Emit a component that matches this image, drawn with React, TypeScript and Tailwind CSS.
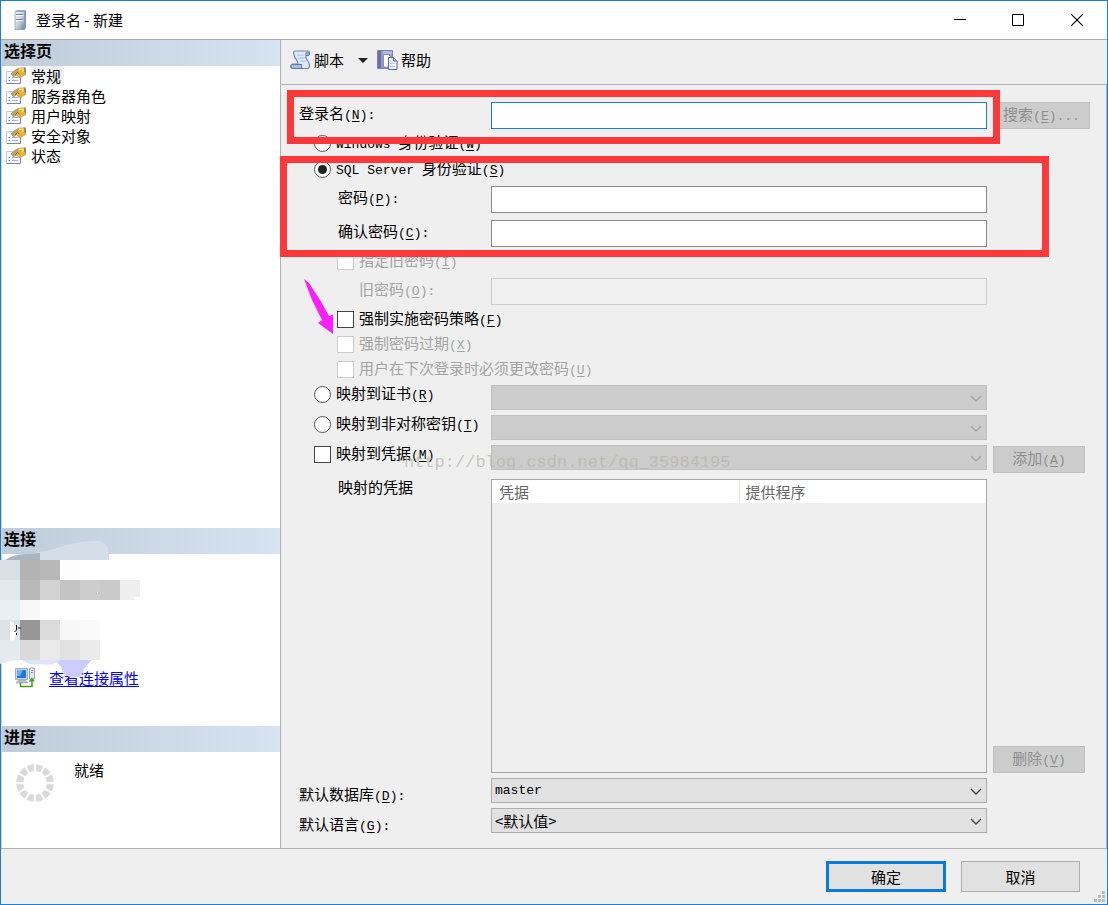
import { useState } from "react";
import type { ReactNode } from "react";

type CaptionProps = { text: ReactNode; hotkey?: string; tail?: string };

function Latin({ children }: { children: ReactNode }) {
  return <span className="font-['Liberation_Mono',monospace] text-[13px]">{children}</span>;
}

function Caption({ text, hotkey, tail }: CaptionProps) {
  return (
    <span className="whitespace-nowrap">
      {text}
      {hotkey && (
        <Latin>
          (<span className="underline underline-offset-2">{hotkey}</span>){tail}
        </Latin>
      )}
    </span>
  );
}

const fieldBase = "h-[27px] min-w-0 flex-1 border px-1 outline-none";
const boxBase =
  "m-0 size-[17px] shrink-0 appearance-none border border-[#444] bg-white disabled:border-[#ccc]";

function SidebarHeading({ children }: { children: ReactNode }) {
  return (
    <h2 className="flex h-[26px] items-center bg-linear-to-r from-[#bfccd9] to-[#d6e4f1] pb-[6px] pl-[2px] text-[16px] font-bold">
      {children}
    </h2>
  );
}

function TextRow({
  id,
  caption,
  indent,
  className,
  input,
  disabled,
  type = "text",
  children,
}: {
  id: string;
  caption: ReactNode;
  indent: string;
  className: string;
  input: string;
  disabled?: boolean;
  type?: string;
  children?: ReactNode;
}) {
  return (
    <div className={`flex h-7 gap-[6px] ${className}`}>
      <div className="flex min-w-0 flex-1">
        <label
          htmlFor={id}
          className={`flex w-[193px] shrink-0 items-center pb-1 ${indent} ${disabled ? "text-[#a3a3a3]" : ""}`}
        >
          {caption}
        </label>
        <input id={id} type={type} disabled={disabled} className={`${fieldBase} ${input}`} />
      </div>
      <div className="w-[97px] shrink-0">{children}</div>
    </div>
  );
}

function CheckRow({
  caption,
  disabled,
  className,
}: {
  caption: ReactNode;
  disabled?: boolean;
  className: string;
}) {
  return (
    <label
      className={`flex items-center gap-[5px] pl-[39px] ${className} ${disabled ? "text-[#a3a3a3]" : ""}`}
    >
      <input type="checkbox" disabled={disabled} className={boxBase} />
      {caption}
    </label>
  );
}

function Radio({
  value,
  current,
  onPick,
}: {
  value: string;
  current: string;
  onPick: (v: string) => void;
}) {
  return (
    <input
      type="radio"
      name="auth"
      checked={current === value}
      onChange={() => onPick(value)}
      className="m-0 grid size-[17px] shrink-0 appearance-none place-items-center rounded-full border border-[#555] bg-white before:size-[9px] before:rounded-full checked:before:bg-[#222]"
    />
  );
}

function Select({
  id,
  label,
  value,
  disabled,
  font = "text-[15px]",
}: {
  id?: string;
  label?: string;
  value?: string;
  disabled?: boolean;
  font?: string;
}) {
  return (
    <div className="relative h-[26px] min-w-0 flex-1">
      <select
        id={id}
        aria-label={label}
        disabled={disabled}
        className={`block h-[25px] w-full appearance-none border border-[#adadad] bg-[#e1e1e1] px-[3px] text-black disabled:border-[#bfbfbf] disabled:bg-[#ccc] disabled:opacity-100 ${font}`}
      >
        {value && <option>{value}</option>}
      </select>
      <svg
        viewBox="0 0 12 7"
        className={`pointer-events-none absolute top-[10px] right-[5px] h-[7px] w-3 ${disabled ? "text-[#a5a5a5]" : "text-[#444]"}`}
      >
        <path d="M1 1l5 5 5-5" fill="none" stroke="currentColor" strokeWidth="1.4" />
      </svg>
    </div>
  );
}

function GreyButton({ children, className }: { children: ReactNode; className: string }) {
  return (
    <button
      type="button"
      disabled
      className={`h-[27px] border border-[#bfbfbf] bg-[#ccc] text-[15px] text-[#8e8e8e] ${className}`}
    >
      {children}
    </button>
  );
}

function ServerIcon() {
  return (
    <svg viewBox="0 0 14 20" className="h-5 w-[14px]">
      <defs>
        <linearGradient id="srv" x1="0" x2="1" y1="0" y2="1">
          <stop offset="0" stopColor="#f4f8fc" />
          <stop offset=".5" stopColor="#c6d3e3" />
          <stop offset="1" stopColor="#7288a8" />
        </linearGradient>
      </defs>
      <path d="M3 1l1-.8h8.500l.5.8v17l-1.500 1.500H3z" fill="#8294ae" />
      <path d="M2 1.500h9.500v18H2z" fill="url(#srv)" stroke="#8c9cb4" strokeWidth=".7" />
      <path d="M3 4.500h7.500M3 9.500h7.500" stroke="#7486a4" />
      <path d="M3 5.500h7.500M3 10.500h7.500" stroke="#fff" />
      <path d="M8.500 16.500h1.500" stroke="#68b06a" strokeWidth="1.5" />
    </svg>
  );
}

function PageIcon() {
  return (
    <svg viewBox="0 0 20 18" className="h-[18px] w-5 shrink-0">
      <path d="M.5 4.500h14v12H.5z" fill="#f6f8ff" stroke="#c3cbe0" />
      <path d="M14.500 6v10.500H1" fill="none" stroke="#7c879e" />
      <path d="M2.500 10.500h1.500M2.500 13.500h1.500" stroke="#6c7cd0" strokeWidth="1.200" />
      <path d="M6 10.500h6M6 13.500h6" stroke="#a3b3ea" strokeWidth="1.200" />
      <path d="M5 7l4.500-4 3-1.800 6-.4 1 1v6l-2 .6-3 2.300-2-.5-2-2.500-3 2.300z" fill="#eab436" stroke="#a08a50" strokeWidth=".6" />
      <path d="M5 6.500l4-3.500 3-1 .5 1.500-4.500 4.500-1 1.500z" fill="#b0a276" />
      <path d="M9 8l2.500-2.500 2 1.500" fill="none" stroke="#7b6a3a" />
      <path d="M13 2.200h4v2.500" fill="none" stroke="#ffdf70" strokeWidth="1.400" />
      <path d="M19 .5v5" fill="none" stroke="#6a8078" strokeWidth="1.400" />
    </svg>
  );
}

function ScriptIcon() {
  return (
    <svg viewBox="0 0 22 20" className="h-5 w-[22px]">
      <path
        d="M5 1h12.500c2.500 0 3 3 1 4.500h-2.500c-1 2 0 3 1.500 5s3 5 1 8H3c-3 0-3-4 0-4.500h5c.5-3-2.500-4.500-3.500-7.500S3 1.500 5 1z"
        fill="#dce9f9"
        stroke="#7189b0"
        strokeWidth="1.200"
      />
      <path d="M2 14.500h10c-1.500 1.500-.5 3.500 1 4H3c-2 0-2.500-2.500-1-4z" fill="#a8c1e2" stroke="#6079a6" />
      <path d="M7.500 5h6M8.500 8h6M10.500 11h5" stroke="#a9c0e2" strokeWidth="1.200" />
      <path d="M16 5.500c-1-2 .5-4.500 2-3.500s1.500 2.500.5 3.500z" fill="#9db7da" stroke="#6079a6" strokeWidth=".8" />
    </svg>
  );
}

function HelpIcon() {
  return (
    <svg viewBox="0 0 21 20" className="h-5 w-[21px]">
      <path d="M.5.5h15v18H.5z" fill="#9299cc" stroke="#7a80b5" />
      <path d="M1 1h3v17H1z" fill="#6b71a8" />
      <path d="M6 1h9v3H6z" fill="#b4b9e2" />
      <path d="M6.500 4.500h5l3 3V17h-8z" fill="#fff" stroke="#8792b6" />
      <path d="M11.500 7.500h5l3.500 3.500v8.500h-8.500z" fill="#eaf2ff" stroke="#566a94" />
      <path d="M16.500 7.500v3.500H20" fill="#b5c8ea" stroke="#566a94" />
      <path d="M13 13.500h5M13 16.500h5" stroke="#b6c7e6" />
    </svg>
  );
}

function ConnectionIcon() {
  return (
    <svg viewBox="0 0 21 21" className="h-[21px] w-[21px]">
      <path d="M.5 1.500h12v11H.5z" fill="#cdd6e5" stroke="#a3aec0" />
      <path d="M2 3h9v8H2z" fill="#1d78df" />
      <path d="M2 3h6l-3 6H2z" fill="#63b1fa" />
      <path d="M3 13.500h8l2 2.500H1z" fill="#b7bfcc" stroke="#949eae" strokeWidth=".6" />
      <path d="M14.500 1.500q2.500-1.500 5 0v10.500h-5z" fill="#e8ebf0" stroke="#9aa2b0" />
      <path d="M16 3.500h2M16 5.500h2" stroke="#7f8ca2" />
      <path d="M5.500 15.500v4h11.500v-6" fill="none" stroke="#40a013" strokeWidth="1.500" />
      <path d="M13.500 14.500L17 10.500l3 4z" fill="#40a013" />
    </svg>
  );
}

function Spinner() {
  return (
    <svg viewBox="0 0 38 38" className="size-[38px]">
      {Array.from({ length: 12 }, (_, i) => (
        <path
          key={i}
          d="M15.500 1Q19 0 22.500 1L20.800 7h-3.600z"
          fill="#dadada"
          stroke="#dadada"
          strokeWidth=".8"
          transform={`rotate(${i * 30 + 15} 19 19)`}
        />
      ))}
    </svg>
  );
}

const mosaic: [number, number, string][] = [
  [0, 40, "#d9dfe3"], [20, 40, "#b3b3b3"], [40, 40, "#b8b8b8"], [60, 40, "#fdfdfd"],
  [0, 60, "#e2e8ec"], [20, 60, "#b9b9b9"], [40, 60, "#d2d2d2"], [60, 60, "#c4c4c4"],
  [80, 60, "#cdcdcd"], [100, 60, "#cacaca"], [120, 60, "#eeeeee"],
  [0, 80, "#e9eff4"], [20, 80, "#f8f8f8"],
  [0, 100, "#dce2e6"], [20, 100, "#969696"], [40, 100, "#dbdbdb"], [60, 100, "#f7f7f7"], [80, 100, "#fafafa"],
  [0, 120, "#e4eaf0"], [20, 120, "#dadada"], [40, 120, "#eaeaea"], [60, 120, "#e1e1e1"], [80, 120, "#ebebeb"],
];

function Mosaic() {
  return (
    <svg viewBox="0 0 150 170" className="pointer-events-none absolute -top-2 -left-[2px] h-[170px] w-[150px]">
      <path d="M5 40q8-6 20-6 15-1 32-6 22-8 42-7 10 2 10 13v6z" fill="#d5dde8" />
      <path d="M5 40q8-5 20-6l15-1v7z" fill="#abb5c1" />
      {mosaic.map(([x, y, fill]) => (
        <rect key={`${x}-${y}`} x={x} y={y} width="20" height="20" fill={fill} />
      ))}
      <path d="M0 140h20q-9 0-20 4z" fill="#e4eaf0" />
      <path d="M22 140h18v4q-10 2-18-4z" fill="#dde4f2" />
      <path d="M40 140h20l-4 3q-8 3-16 1z" fill="#e1e1fe" />
      <path d="M60 140h32q-7 6-10 14-4 5-12 3-7-2-9-10l-4-5z" fill="#ccccff" />
      <path d="M10 101q6 2 6 10l-1 8q-3 3-5 0z" fill="#fff" />
      <path d="M16.500 105v5M14.500 112l2-2M16.500 115v-2M18 108h3" stroke="#111" fill="none" />
      <rect x="97" y="72" width="1" height="1" fill="#fff" />
      <rect x="134" y="77" width="6" height="3" fill="#fff" />
    </svg>
  );
}

const pages = ["常规", "服务器角色", "用户映射", "安全对象", "状态"];

export default function App() {
  const [auth, setAuth] = useState("sql");
  return (
    <div className="flex min-h-screen flex-col border border-[#1a80d6] bg-[#efefef] font-['Noto_Sans_CJK_SC',sans-serif] text-[15px] leading-5 text-black">
      <header className="flex h-[39px] shrink-0 items-center justify-between border-b border-[#aaa] bg-white pl-3">
        <div className="flex items-center gap-[9px]">
          <ServerIcon />
          <h1>登录名 - 新建</h1>
        </div>
        <div className="flex h-full">
          <button type="button" aria-label="最小化" className="grid w-[58px] place-items-center">
            <svg viewBox="0 0 12 12" className="size-3"><path d="M0 5.500h12" stroke="#000" /></svg>
          </button>
          <button type="button" aria-label="最大化" className="grid w-[58px] place-items-center">
            <svg viewBox="0 0 12 12" className="size-3"><path d="M.5.5h11v11H.5z" fill="none" stroke="#000" /></svg>
          </button>
          <button type="button" aria-label="关闭" className="grid w-[60px] place-items-center">
            <svg viewBox="0 0 12 12" className="size-3"><path d="M0 0l12 12M12 0L0 12" stroke="#000" strokeWidth="1.100" /></svg>
          </button>
        </div>
      </header>

      <div className="flex flex-1 border-b border-[#b0b0b8]">
        <aside className="flex w-[280px] shrink-0 flex-col border-r border-l border-r-[#b0b0b8] border-l-[#cfd3d8] bg-white">
          <section className="flex-1">
            <SidebarHeading>选择页</SidebarHeading>
            <nav>
              {pages.map((p, i) => (
                <a key={p} href="#" className="flex h-5 items-center gap-1 pl-1">
                  <PageIcon />
                  <span className={i === 0 ? "bg-[#f0f0f0] pr-[3px] pl-px" : "pl-px"}>{p}</span>
                </a>
              ))}
            </nav>
          </section>
          <section className="relative h-[198px]">
            <SidebarHeading>连接</SidebarHeading>
            <div className="flex items-center gap-[13px] pt-[113px] pl-[13px]">
              <ConnectionIcon />
              <a href="#" className="text-[#00f] underline underline-offset-2">查看连接属性</a>
            </div>
            <Mosaic />
          </section>
          <section className="h-[122px]">
            <SidebarHeading>进度</SidebarHeading>
            <div className="flex gap-5 pt-2 pl-[14px]">
              <div className="pt-1"><Spinner /></div>
              <span>就绪</span>
            </div>
          </section>
        </aside>

        <main className="flex min-w-0 flex-1 flex-col">
          <div className="flex h-[45px] shrink-0 items-center border-b border-[#b0b0b8] pb-1 pl-[9px]">
            <button type="button" className="flex items-center gap-[2px]">
              <ScriptIcon />
              脚本
              <svg viewBox="0 0 10 5" className="ml-3 h-[5px] w-[10px]"><path d="M0 0h10L5 5z" fill="#222" /></svg>
            </button>
            <button type="button" className="ml-[9px] flex items-center gap-[3px]">
              <HelpIcon />
              帮助
            </button>
          </div>

          <form className="relative flex flex-1 flex-col border-r border-[#b0b0b8] pt-[17px] pr-4 pb-[14px] pl-[17px]">
            <TextRow
              id="login"
              className=""
              indent="pl-px"
              caption={<Caption text="登录名" hotkey="N" tail=":" />}
              input="border-[#1a80d6] bg-white"
            >
              <GreyButton className="w-[97px]"><Caption text="搜索" hotkey="E" tail="..." /></GreyButton>
            </TextRow>
            <label className="flex h-[27px] items-center gap-[5px] pl-4">
              <Radio value="windows" current={auth} onPick={setAuth} />
              <Caption text={<><Latin>Windows </Latin>身份验证</>} hotkey="W" />
            </label>
            <label className="flex h-[25px] items-center gap-[5px] pl-4">
              <Radio value="sql" current={auth} onPick={setAuth} />
              <Caption text={<><Latin>SQL Server </Latin>身份验证</>} hotkey="S" />
            </label>
            <TextRow
              id="password"
              type="password"
              className="mt-1"
              indent="pl-10"
              caption={<Caption text="密码" hotkey="P" tail=":" />}
              input="border-[#8a8a8a] bg-white"
            />
            <TextRow
              id="confirm"
              type="password"
              className="mt-[6px]"
              indent="pl-10"
              caption={<Caption text="确认密码" hotkey="C" tail=":" />}
              input="border-[#8a8a8a] bg-white"
            />
            <CheckRow className="h-[26px]" disabled caption={<Caption text="指定旧密码" hotkey="I" />} />
            <TextRow
              id="old"
              type="password"
              className="mt-1"
              disabled
              indent="pl-[61px]"
              caption={<Caption text="旧密码" hotkey="O" tail=":" />}
              input="border-[#ccc] bg-[#f0f0f0]"
            />
            <CheckRow className="h-[26px]" caption={<Caption text="强制实施密码策略" hotkey="F" />} />
            <CheckRow className="h-[25px]" disabled caption={<Caption text="强制密码过期" hotkey="X" />} />
            <CheckRow className="h-[25px]" disabled caption={<Caption text="用户在下次登录时必须更改密码" hotkey="U" />} />

            <div className="mt-[3px] flex h-[26px] pr-[103px]">
              <label className="flex w-[193px] shrink-0 items-center gap-[5px] pb-[7px] pl-4">
                <Radio value="cert" current={auth} onPick={setAuth} />
                <Caption text="映射到证书" hotkey="R" />
              </label>
              <Select label="证书" disabled />
            </div>
            <div className="mt-1 flex h-[26px] pr-[103px]">
              <label className="flex w-[193px] shrink-0 items-center gap-[5px] pb-[7px] pl-4">
                <Radio value="key" current={auth} onPick={setAuth} />
                <Caption text="映射到非对称密钥" hotkey="T" />
              </label>
              <Select label="非对称密钥" disabled />
            </div>
            <div className="mt-1 flex h-[26px] gap-[6px]">
              <div className="flex min-w-0 flex-1">
                <label className="flex w-[193px] shrink-0 items-center gap-[5px] pb-[7px] pl-4">
                  <input type="checkbox" className={boxBase} />
                  <Caption text="映射到凭据" hotkey="M" />
                </label>
                <Select label="凭据" disabled />
              </div>
              <div className="w-[97px] shrink-0 pt-px">
                <GreyButton className="w-[92px]"><Caption text="添加" hotkey="A" /></GreyButton>
              </div>
            </div>

            <div className="mt-2 flex flex-1 gap-[6px]">
              <div className="flex min-w-0 flex-1">
                <div className="w-[193px] shrink-0 pl-10 leading-4">映射的凭据</div>
                <div className="flex-1 border border-[#a5a5ad]">
                  <table className="w-full table-fixed border-collapse">
                    <thead>
                      <tr className="h-[23px] bg-white text-left text-[#666]">
                        <th className="border-r border-[#e2e2e2] p-0 pl-[7px] font-normal">凭据</th>
                        <th className="p-0 pl-[6px] font-normal">提供程序</th>
                      </tr>
                    </thead>
                  </table>
                </div>
              </div>
              <div className="flex w-[97px] shrink-0 items-end">
                <GreyButton className="w-[92px]"><Caption text="删除" hotkey="V" /></GreyButton>
              </div>
            </div>

            <div className="mt-[5px] flex h-[26px] pr-[103px]">
              <label htmlFor="db" className="flex w-[193px] shrink-0 items-center pt-2 pl-px">
                <Caption text="默认数据库" hotkey="D" tail=":" />
              </label>
              <Select id="db" value="master" font="font-['Liberation_Mono',monospace] text-[13px]" />
            </div>
            <div className="mt-1 flex h-[26px] pr-[103px]">
              <label htmlFor="lang" className="flex w-[193px] shrink-0 items-center pt-2 pl-px">
                <Caption text="默认语言" hotkey="G" tail=":" />
              </label>
              <Select id="lang" value="<默认值>" />
            </div>

            <div className="pointer-events-none absolute top-[5px] right-[106px] left-[6px] h-[54px] border-[7px] border-[#fc3838]" />
            <div className="pointer-events-none absolute top-[71px] right-[57px] -left-px h-[101px] border-[7px] border-[#fc3838]" />
            <svg viewBox="0 0 30 56" className="pointer-events-none absolute top-[194px] left-[23px] h-14 w-[30px]">
              <path d="M0 0L5 4l11 17 9 16 4-1.500V55L14 44l4-3L8 21z" fill="#fb1ffb" />
            </svg>
            <div className="pointer-events-none absolute top-[368px] left-[123px] font-['Liberation_Mono',monospace] text-[17px] whitespace-nowrap text-[#b4b4a8]/70">
              http://blog.csdn.net/qq_35984195
            </div>
          </form>
        </main>
      </div>

      <footer className="relative flex h-[55px] shrink-0 justify-end gap-[15px] pt-3 pr-[27px]">
        <button type="button" className="h-[31px] w-[120px] border-[3px] border-[#0a7bdc] bg-[#e1e1e1]">确定</button>
        <button type="button" className="h-[31px] w-[119px] border border-[#adadad] bg-[#e1e1e1]">取消</button>
        <svg viewBox="0 0 11 11" className="absolute right-[2px] bottom-[2px] size-[11px]">
          <path d="M8 0h3v3H8zM4 4h3v3H4zM8 4h3v3H8zM0 8h3v3H0zM4 8h3v3H4zM8 8h3v3H8z" fill="#bdbdbd" />
        </svg>
      </footer>
    </div>
  );
}
